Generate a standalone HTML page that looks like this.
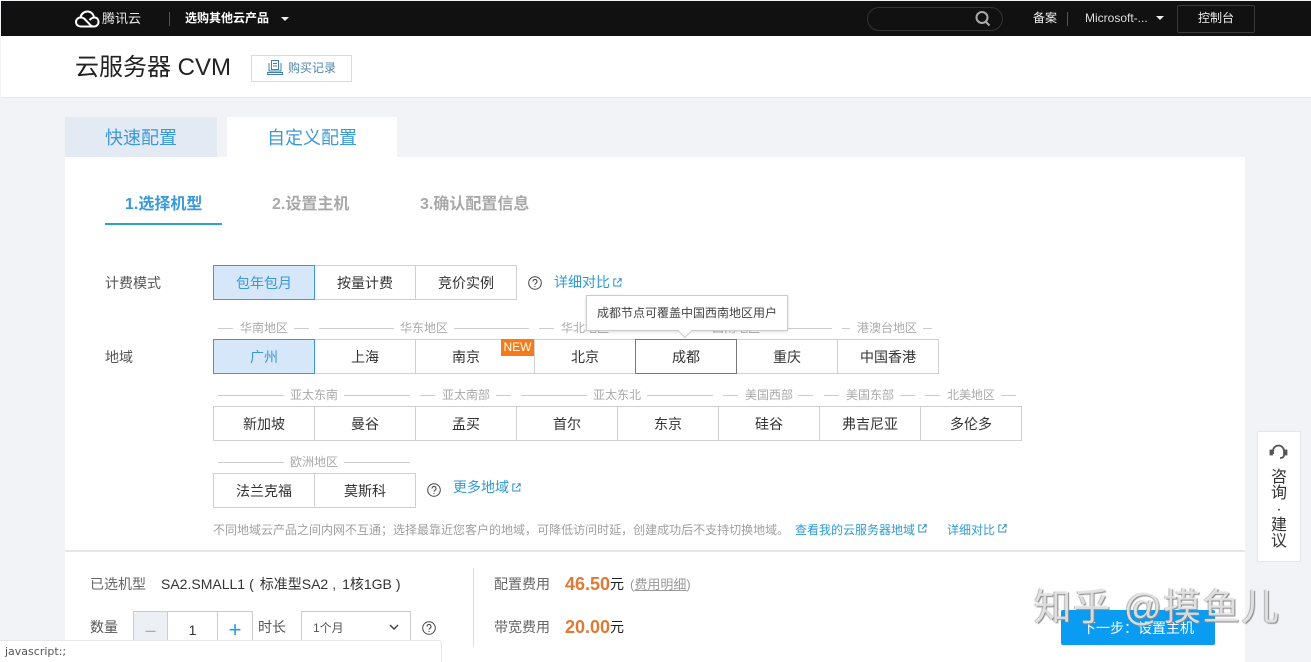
<!DOCTYPE html>
<html lang="zh-CN"><head><meta charset="utf-8"><title>云服务器 CVM</title>
<style>
html,body{margin:0;padding:0;width:1311px;height:662px;overflow:hidden;background:#f1f3f7}
body{position:relative;font-family:"Liberation Sans","Noto Sans CJK SC",sans-serif;font-size:14px;color:#333}
.a,.b,.l,.g{position:absolute;white-space:nowrap}
.b{box-sizing:border-box;border:1px solid #d0d0d0;background:#fff;text-align:center;font-size:14px;color:#333;height:35px;line-height:34px}
.sel{background:#d5e7f8;border-color:#3b9bd0;color:#3a96dd;z-index:2}
.l{height:1px;background:#ccc}
.g{font-size:12px;color:#aaa;line-height:14px;text-align:center}
.lk{color:#2e9bd6}
.p{font-family:"Noto Sans CJK TC",sans-serif}
svg{position:absolute;overflow:visible}
</style></head><body>

<div class="a" style="left:1px;top:1px;width:1310px;height:35px;background:#111"></div>
<svg style="left:75px;top:10px" width="25" height="18" viewBox="0 0 25 18" fill="none" stroke="#fff" stroke-width="2"><path d="M6 16.500C3 16.500 1 14.500 1 12S3 7.500 6 7.500c2 0 3.500 1 5 3l3 3c1.500 2 2.500 3 5 3 2.500 0 4.500-2 4.500-4.500S22 7.500 19.500 7.500c-2 0-3.500 1-5 2.500"/><path d="M5.500 7.500C6 4 9 1.500 12.500 1.500c3.500 0 6 2.500 6.500 6M6 16.500h13.500"/></svg>
<div class="a" style="left:102px;top:11px;font-size:13px;line-height:16px;color:#e8e8e8">腾讯云</div>
<div class="a" style="left:169px;top:12px;width:1px;height:14px;background:#555"></div>
<div class="a" style="left:185px;top:10px;font-size:12px;line-height:16px;color:#fff;font-weight:bold">选购其他云产品</div>
<div class="a" style="left:281px;top:17px;border:4px solid transparent;border-top:4px solid #eee;border-bottom:0"></div>
<div class="a" style="left:867px;top:7px;width:136px;height:24px;box-sizing:border-box;border:1px solid #333;border-radius:12px"></div>
<svg style="left:975px;top:10px" width="16" height="17" fill="none" stroke="#aaa" stroke-width="2"><circle cx="7" cy="7.500" r="5.500"/><path d="M11 12l3.500 3.500"/></svg>
<div class="a" style="left:1033px;top:10px;font-size:12px;line-height:16px;color:#eee">备案</div>
<div class="a" style="left:1067px;top:12px;width:1px;height:14px;background:#555"></div>
<div class="a" style="left:1085px;top:10px;font-size:12px;line-height:16px;color:#ddd">Microsoft-...</div>
<div class="a" style="left:1156px;top:16px;border:4px solid transparent;border-top:4px solid #eee;border-bottom:0"></div>
<div class="a" style="left:1177px;top:5px;width:78px;height:28px;box-sizing:border-box;border:1px solid #3a3a3a;border-radius:2px;text-align:center;line-height:25px;font-size:12px;color:#eee">控制台</div>

<div class="a" style="left:1px;top:36px;width:1310px;height:61px;background:#fff;border-bottom:1px solid #e6e8ec"></div>
<div class="a" style="left:75px;top:52px;font-size:24px;line-height:32px;color:#222">云服务器 CVM</div>
<div class="a" style="left:251px;top:55px;width:101px;height:27px;box-sizing:border-box;border:1px solid #d5dbe3;background:#fff"></div>
<svg style="left:267px;top:60px" width="16" height="16" fill="none" stroke="#3d83a8" stroke-width="1"><path d="M4.500.5h7v9h-7zM6 3.500h4M6 6h4M2 3v8h12V3M.5 12.500h15v2H.5z"/></svg>
<div class="a" style="left:288px;top:60px;font-size:12px;line-height:16px;color:#4d86ad">购买记录</div>

<div class="a" style="left:65px;top:117px;width:152px;height:40px;background:#e4eaf4;text-align:center;font-size:18px;line-height:42px;color:#3a9ad9">快速配置</div>
<div class="a" style="left:227px;top:117px;width:170px;height:40px;background:#fff;text-align:center;font-size:18px;line-height:42px;color:#3a9ad9">自定义配置</div>
<div class="a" style="left:65px;top:157px;width:1180px;height:505px;background:#fff"></div>

<div class="a" style="left:125px;top:195px;font-size:16px;line-height:20px;font-weight:bold;color:#3a9ad9">1.选择机型</div>
<div class="a" style="left:105px;top:223px;width:117px;height:2px;background:#2aa3cf"></div>
<div class="a" style="left:272px;top:195px;font-size:16px;line-height:20px;font-weight:bold;color:#a8a8a8">2.设置主机</div>
<div class="a" style="left:420px;top:195px;font-size:16px;line-height:20px;font-weight:bold;color:#a8a8a8">3.确认配置信息</div>

<div class="a" style="left:105px;top:274px;line-height:18px;color:#555">计费模式</div>
<div class="b sel" style="left:213px;top:265px;width:102px">包年包月</div>
<div class="b" style="left:314px;top:265px;width:102px">按量计费</div>
<div class="b" style="left:415px;top:265px;width:102px">竞价实例</div>
<svg style="left:528px;top:276px" width="14" height="14" fill="none" stroke="#444"><circle cx="7" cy="7" r="6.300"/><path d="M5 5.500a2 2 0 1 1 3 1.700c-.7.4-1 .8-1 1.500"/><path d="M7 10v1"/></svg>
<div class="a lk" style="left:554px;top:273px;line-height:18px">详细对比</div>
<svg style="left:613px;top:278px" width="9" height="9" fill="none" stroke="#2e8fc4"><path d="M3.500 1H.8v7h7V5.500M4 5l4-4M5.500.8h2.700v2.700"/></svg>

<div class="a" style="left:105px;top:348px;line-height:18px;color:#555">地域</div>

<div class="l" style="left:218px;top:328px;width:15px"></div><div class="g" style="left:240px;top:321px">华南地区</div><div class="l" style="left:294px;top:328px;width:15px"></div>
<div class="l" style="left:319px;top:328px;width:75px"></div><div class="g" style="left:400px;top:321px">华东地区</div><div class="l" style="left:454px;top:328px;width:75px"></div>
<div class="l" style="left:539px;top:328px;width:15px"></div><div class="g" style="left:561px;top:321px">华北地区</div>
<div class="g" style="left:712px;top:321px">西南地区</div><div class="l" style="left:770px;top:328px;width:62px"></div>
<div class="l" style="left:842px;top:328px;width:8px"></div><div class="g" style="left:857px;top:321px">港澳台地区</div><div class="l" style="left:923px;top:328px;width:9px"></div>

<div class="b sel" style="left:213px;top:339px;width:102px">广州</div>
<div class="b" style="left:314px;top:339px;width:102px">上海</div>
<div class="b" style="left:415px;top:339px;width:120px;padding-right:18px">南京</div>
<div class="b" style="left:534px;top:339px;width:102px">北京</div>
<div class="b" style="left:736px;top:339px;width:102px">重庆</div>
<div class="b" style="left:837px;top:339px;width:102px">中国香港</div>
<div class="b" style="left:635px;top:339px;width:102px;border-color:#777;z-index:2">成都</div>
<div class="a" style="left:501px;top:339px;width:33px;height:17px;background:#f47b1c;color:#ffe;font-size:12px;line-height:17px;text-align:center;z-index:3">NEW</div>

<div class="a" style="left:586px;top:295px;width:202px;height:36px;box-sizing:border-box;border:1px solid #ccc;background:#fff;box-shadow:0 1px 3px rgba(0,0,0,.15);font-size:12px;line-height:34px;text-align:center;color:#444;z-index:5">成都节点可覆盖中国西南地区用户</div>
<div class="a" style="left:680px;top:326px;width:9px;height:9px;background:#fff;border-right:1px solid #ccc;border-bottom:1px solid #ccc;transform:rotate(45deg);z-index:6"></div>

<div class="l" style="left:218px;top:395px;width:66px"></div><div class="g" style="left:290px;top:388px">亚太东南</div><div class="l" style="left:344px;top:395px;width:66px"></div>
<div class="l" style="left:420px;top:395px;width:15px"></div><div class="g" style="left:442px;top:388px">亚太南部</div><div class="l" style="left:496px;top:395px;width:15px"></div>
<div class="l" style="left:521px;top:395px;width:66px"></div><div class="g" style="left:593px;top:388px">亚太东北</div><div class="l" style="left:647px;top:395px;width:66px"></div>
<div class="l" style="left:723px;top:395px;width:15px"></div><div class="g" style="left:745px;top:388px">美国西部</div><div class="l" style="left:798px;top:395px;width:15px"></div>
<div class="l" style="left:824px;top:395px;width:15px"></div><div class="g" style="left:846px;top:388px">美国东部</div><div class="l" style="left:900px;top:395px;width:15px"></div>
<div class="l" style="left:925px;top:395px;width:15px"></div><div class="g" style="left:947px;top:388px">北美地区</div><div class="l" style="left:1001px;top:395px;width:15px"></div>

<div class="b" style="left:213px;top:406px;width:102px">新加坡</div>
<div class="b" style="left:314px;top:406px;width:102px">曼谷</div>
<div class="b" style="left:415px;top:406px;width:102px">孟买</div>
<div class="b" style="left:516px;top:406px;width:102px">首尔</div>
<div class="b" style="left:617px;top:406px;width:102px">东京</div>
<div class="b" style="left:718px;top:406px;width:102px">硅谷</div>
<div class="b" style="left:819px;top:406px;width:102px">弗吉尼亚</div>
<div class="b" style="left:920px;top:406px;width:102px">多伦多</div>

<div class="l" style="left:218px;top:462px;width:66px"></div><div class="g" style="left:290px;top:455px">欧洲地区</div><div class="l" style="left:344px;top:462px;width:66px"></div>
<div class="b" style="left:213px;top:473px;width:102px">法兰克福</div>
<div class="b" style="left:314px;top:473px;width:102px">莫斯科</div>
<svg style="left:427px;top:483px" width="14" height="14" fill="none" stroke="#444"><circle cx="7" cy="7" r="6.300"/><path d="M5 5.500a2 2 0 1 1 3 1.700c-.7.4-1 .8-1 1.500"/><path d="M7 10v1"/></svg>
<div class="a lk" style="left:453px;top:478px;line-height:18px">更多地域</div>
<svg style="left:512px;top:483px" width="9" height="9" fill="none" stroke="#2e8fc4"><path d="M3.500 1H.8v7h7V5.500M4 5l4-4M5.500.8h2.700v2.700"/></svg>

<div class="a" style="left:213px;top:522px;font-size:12px;line-height:16px;color:#a0a0a0">不同地域云产品之间内网不互通<span class="p">；</span>选择最靠近您客户的地域<span class="p">，</span>可降低访问时延<span class="p">，</span>创建成功后不支持切换地域。</div>
<div class="a lk" style="left:795px;top:522px;font-size:12px;line-height:16px">查看我的云服务器地域</div>
<svg style="left:918px;top:524px" width="9" height="9" fill="none" stroke="#2e8fc4"><path d="M3.500 1H.8v7h7V5.500M4 5l4-4M5.500.8h2.700v2.700"/></svg>
<div class="a lk" style="left:947px;top:522px;font-size:12px;line-height:16px">详细对比</div>
<svg style="left:998px;top:524px" width="9" height="9" fill="none" stroke="#2e8fc4"><path d="M3.500 1H.8v7h7V5.500M4 5l4-4M5.500.8h2.700v2.700"/></svg>

<div class="a" style="left:65px;top:550px;width:1180px;height:2px;background:#e4e6ea"></div>

<div class="a" style="left:90px;top:575px;line-height:18px;color:#666">已选机型</div>
<div class="a" style="left:161px;top:575px;line-height:18px;color:#333">SA2.SMALL1<span style="margin:0 6px 0 4px">(</span>标准型SA2<span style="margin:0 6px 0 4px">,</span>1核1GB<span style="margin-left:4px">)</span></div>
<div class="a" style="left:90px;top:618px;line-height:18px;color:#555">数量</div>
<div class="a" style="left:133px;top:611px;width:35px;height:40px;box-sizing:border-box;border:1px solid #ccc;background:#eceff4;text-align:center;color:#aaa;font-size:18px;line-height:36px">–</div>
<div class="a" style="left:167px;top:611px;width:51px;height:40px;box-sizing:border-box;border:1px solid #ccc;background:#fff;text-align:center;font-size:14px;line-height:36px">1</div>
<div class="a" style="left:217px;top:611px;width:36px;height:40px;box-sizing:border-box;border:1px solid #ccc;background:#fff;text-align:center;color:#2e9bd6;font-size:22px;font-weight:300;line-height:36px">+</div>
<div class="a" style="left:258px;top:618px;line-height:18px;color:#555">时长</div>
<div class="a" style="left:301px;top:611px;width:110px;height:40px;box-sizing:border-box;border:1px solid #ccc;background:#fff;padding-left:11px;font-size:12px;line-height:33px;color:#555">1个月</div>
<svg style="left:389px;top:624px" width="10" height="7" fill="none" stroke="#444" stroke-width="1.500"><path d="M1 1l4 4 4-4"/></svg>
<svg style="left:422px;top:621px" width="14" height="14" fill="none" stroke="#444"><circle cx="7" cy="7" r="6.300"/><path d="M5 5.500a2 2 0 1 1 3 1.700c-.7.4-1 .8-1 1.500"/><path d="M7 10v1"/></svg>

<div class="a" style="left:473px;top:568px;width:1px;height:79px;background:#ddd"></div>
<div class="a" style="left:494px;top:575px;line-height:18px;color:#666">配置费用</div>
<div class="a" style="left:565px;top:573px;font-size:18px;line-height:22px;font-weight:bold;color:#dd7a35">46.50</div>
<div class="a" style="left:610px;top:575px;line-height:18px;color:#222">元</div>
<div class="a" style="left:630px;top:576px;font-size:13px;line-height:18px;color:#999">(<u>费用明细</u>)</div>
<div class="a" style="left:494px;top:618px;line-height:18px;color:#666">带宽费用</div>
<div class="a" style="left:565px;top:616px;font-size:18px;line-height:22px;font-weight:bold;color:#dd7a35">20.00</div>
<div class="a" style="left:610px;top:618px;line-height:18px;color:#222">元</div>

<div class="a" style="left:1061px;top:610px;width:154px;height:35px;background:#0a9bf3;border-radius:2px;color:#fff;text-align:center;font-size:14px;line-height:36px">下一步<span class="p">：</span>设置主机</div>

<div class="a" style="left:1257px;top:431px;width:44px;height:131px;box-sizing:border-box;border:1px solid #e4e6ea;background:#fff"></div>
<svg style="left:1269px;top:444px" width="20" height="18" fill="none" stroke="#555" stroke-width="1.800"><path d="M4 10V7a5.500 5.500 0 0 1 11 0v4c0 2-1.500 3-4 3"/><rect x="1.500" y="6.500" width="1.500" height="4" fill="#555"/><rect x="16" y="6.500" width="1.500" height="4" fill="#555"/></svg>
<div class="a" style="left:1270px;top:470px;width:18px;font-size:16px;line-height:16px;text-align:center;white-space:normal;color:#333">咨询<span style="display:block;line-height:16px">·</span>建议</div>

<div class="a" style="left:1034px;top:586px;font-size:37.500px;line-height:42px;color:rgba(255,255,255,.7);text-shadow:1px 1px 1px #888,-1px 0 1px rgba(120,120,120,.6);letter-spacing:1.500px;z-index:8">知乎 @摸鱼儿</div>

<div class="a" style="left:0;top:640px;width:442px;height:22px;box-sizing:border-box;background:#fff;border:1px solid #e6e6e6;border-bottom:0;border-left:0;border-radius:0 3px 0 0;font-size:12px;line-height:20px;color:#555;padding-left:5px;font-family:'DejaVu Sans',sans-serif;z-index:9"><span style="font-size:11px">javascript:;</span></div>
</body></html>
